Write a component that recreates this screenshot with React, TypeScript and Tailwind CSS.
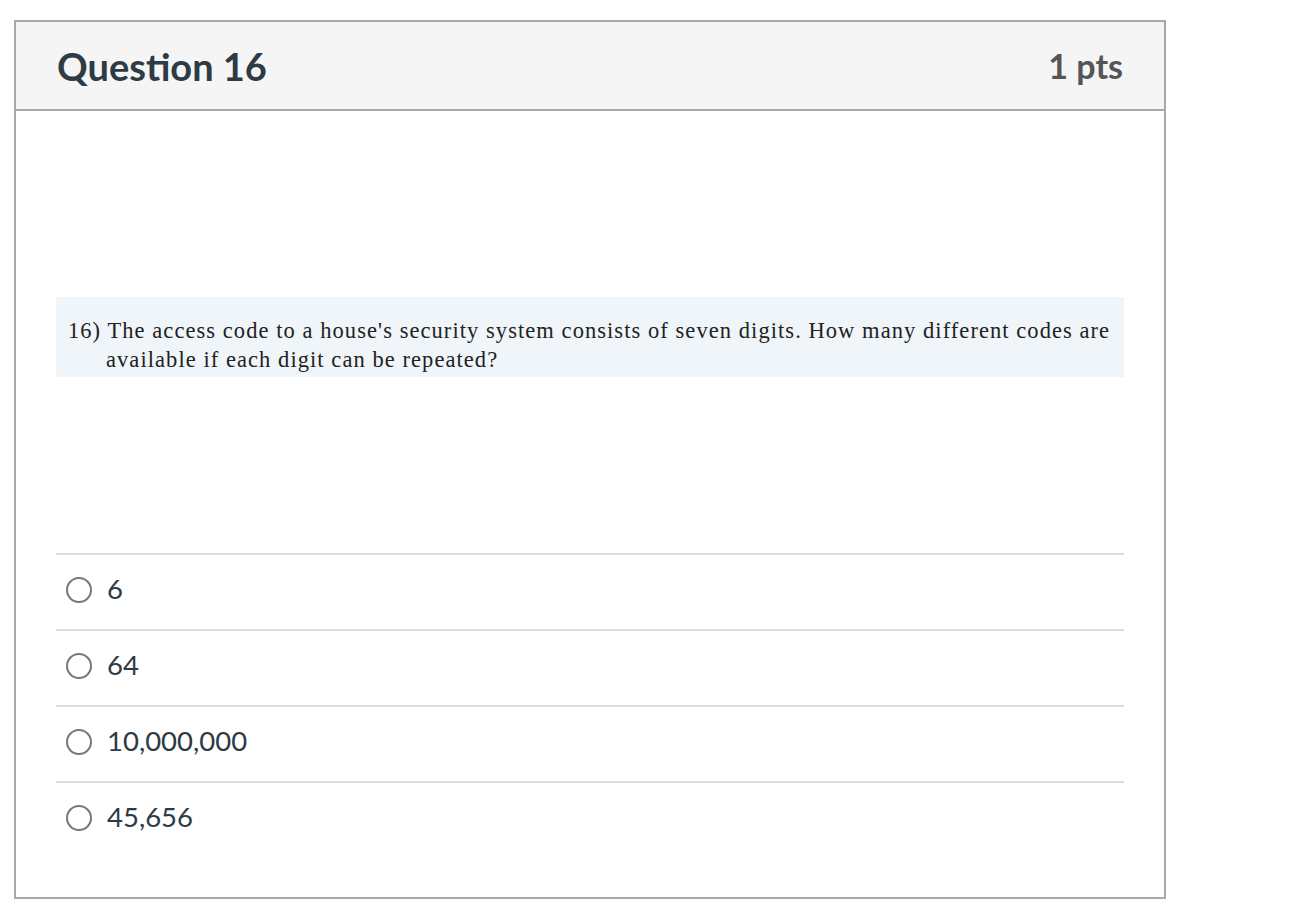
import React from "react";

const answers = ["6", "64", "10,000,000", "45,656"];

export default function App() {
  return (
    <div className="min-h-[924px] w-[1308px] bg-white pt-[20px] pl-[14px]" style={{ fontFamily: "Lato, 'Noto Sans', sans-serif" }}>
      <div className="w-[1152px] border-2 border-[#a8a8a8] bg-white">
        <div className="flex h-[89px] items-center justify-between border-b-2 border-[#a8a8a8] bg-[#f5f5f5] px-[41px]">
          <h2 className="text-[38px] font-bold leading-none text-[#2d3b45]">Question 16</h2>
          <div className="text-[34px] font-bold leading-none text-[#555555]">1 pts</div>
        </div>
        <div className="px-[40px] pt-[186px] pb-[40px]">
          <div
            className="h-[80px] bg-[#eff5f8] pl-[12px] pt-[19px] text-[22.5px] leading-[29px] tracking-[1.06px] text-[#222222]"
            style={{ fontFamily: "'Liberation Serif', 'DejaVu Serif', serif" }}
          >
            <div className="whitespace-nowrap">16) The access code to a house's security system consists of seven digits. How many different codes are</div>
            <div className="pl-[38px]">available if each digit can be repeated?</div>
          </div>
          <div className="mt-[176px]">
            {answers.map((a) => (
              <div key={a} className="flex h-[76px] items-center border-t-2 border-[#dddddd] pb-[4px] pl-[10px]">
                <span className="box-border h-[26px] w-[26px] rounded-full border-2 border-[#777777] bg-white" />
                <span className="ml-[15px] -translate-y-[1px] text-[27.5px] leading-none text-[#2d3b45]">{a}</span>
              </div>
            ))}
          </div>
        </div>
      </div>
    </div>
  );
}
